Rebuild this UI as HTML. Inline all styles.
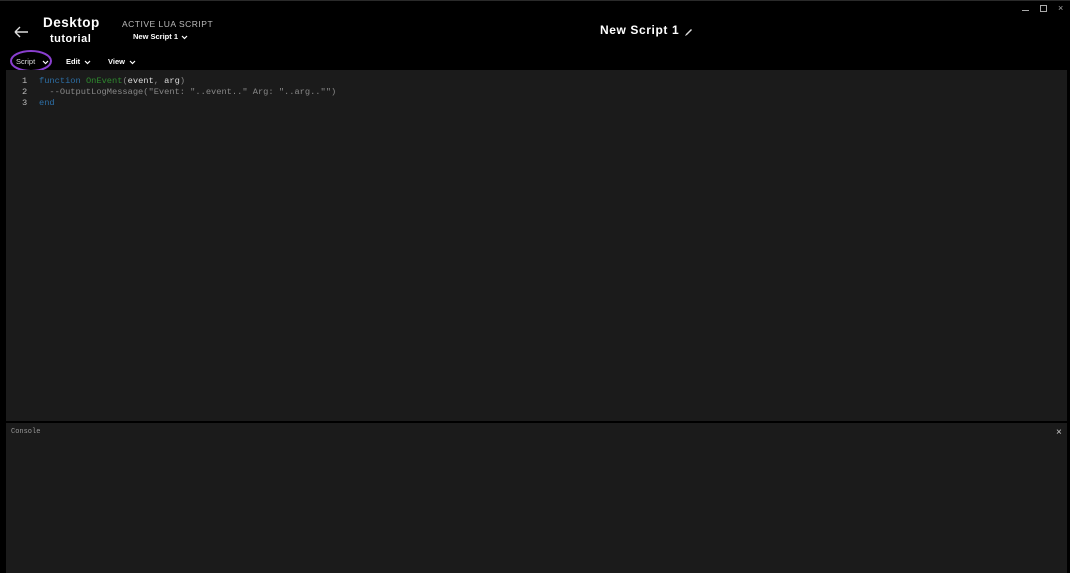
<!DOCTYPE html>
<html><head><meta charset="utf-8"><style>
html,body{margin:0;padding:0;}
body{width:1070px;height:573px;background:#000;position:relative;overflow:hidden;font-family:"Liberation Sans",sans-serif;color:#fff;}
.abs{position:absolute;}
.code{font-family:"Liberation Mono",monospace;font-size:8.7px;line-height:11px;}
</style></head><body>
<div class="abs" style="left:0;top:0;width:1070px;height:1px;background:#2a2a2a"></div>
<svg class="abs" style="left:14px;top:26px" width="15" height="12"><path d="M1 6 H14 M1 6 L6 1 M1 6 L6 11" stroke="#ddd" stroke-width="1.4" fill="none"/></svg>
<div class="abs" style="left:43px;top:15px;font-size:13.5px;font-weight:bold;letter-spacing:0.5px">Desktop</div>
<div class="abs" style="left:50px;top:33px;font-size:11px;font-weight:bold;letter-spacing:0.5px">tutorial</div>
<div class="abs" style="left:122px;top:19px;font-size:8.5px;color:#bbb;letter-spacing:0.5px">ACTIVE LUA SCRIPT</div>
<div class="abs" style="left:133px;top:32px;font-size:7.5px;font-weight:bold">New Script 1</div>
<svg class="abs" style="left:181px;top:35px" width="7" height="5"><path d="M1 1 L3.5 3.5 L6 1" stroke="#fff" stroke-width="1.2" fill="none"/></svg>
<div class="abs" style="left:600px;top:23px;font-size:12px;font-weight:bold;letter-spacing:0.6px">New Script 1</div>
<svg class="abs" style="left:684px;top:28px" width="9" height="9"><path d="M1 8 L2 6 L7 1 L8 2 L3 7 Z" fill="#ddd"/></svg>
<div class="abs" style="left:1022px;top:10px;width:7px;height:1px;background:#aaa"></div>
<div class="abs" style="left:1040px;top:5px;width:5px;height:5px;border:1px solid #aaa"></div>
<div class="abs" style="left:1058px;top:3px;font-size:9px;color:#aaa">&#215;</div>
<div class="abs" style="left:16px;top:57px;font-size:7.5px;color:#ddd">Script</div>
<svg class="abs" style="left:42px;top:60px" width="7" height="5"><path d="M1 1 L3.5 3.5 L6 1" stroke="#fff" stroke-width="1.2" fill="none"/></svg>
<svg class="abs" style="left:9px;top:48px" width="46" height="26"><ellipse cx="22" cy="13" rx="20" ry="10" fill="none" stroke="#8a3fd0" stroke-width="2"/></svg>
<div class="abs" style="left:66px;top:57px;font-size:7.5px;font-weight:bold">Edit</div>
<svg class="abs" style="left:84px;top:60px" width="7" height="5"><path d="M1 1 L3.5 3.5 L6 1" stroke="#fff" stroke-width="1.2" fill="none"/></svg>
<div class="abs" style="left:108px;top:57px;font-size:7.5px;font-weight:bold">View</div>
<svg class="abs" style="left:129px;top:60px" width="7" height="5"><path d="M1 1 L3.5 3.5 L6 1" stroke="#fff" stroke-width="1.2" fill="none"/></svg>
<div class="abs" style="left:6px;top:70px;width:1061px;height:351px;background:#1b1b1b"></div>
<div class="abs code" style="left:22px;top:76px;color:#bbb">1<br>2<br>3</div>
<div class="abs code" style="left:39px;top:76px;white-space:pre;color:#888"><span style="color:#2d6fa6">function</span> <span style="color:#2f8a2f">OnEvent</span>(<span style="color:#ddd">event</span>, <span style="color:#ddd">arg</span>)
  --OutputLogMessage("Event: "..event.." Arg: "..arg.."")
<span style="color:#2d6fa6">end</span></div>
<div class="abs" style="left:6px;top:423px;width:1061px;height:150px;background:#1b1b1b"></div>
<div class="abs" style="left:11px;top:428px;font-family:'Liberation Mono',monospace;font-size:7px;color:#999">Console</div>
<div class="abs" style="left:1056px;top:427px;font-size:10px;color:#ccc">&#215;</div>
</body></html>
